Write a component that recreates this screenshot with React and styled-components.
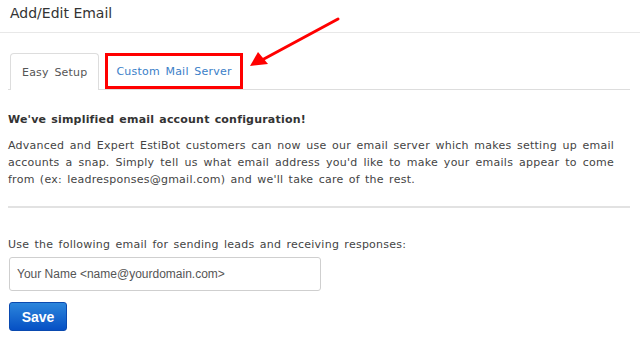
import React from "react";
import styled, { createGlobalStyle } from "styled-components";

const GlobalStyle = createGlobalStyle`
    body {
        margin: 0;
        background: #fff;
        font-family: "DejaVu Sans", Verdana, sans-serif;
        color: #333;
    }
`;

const Page = styled.div`
    position: relative;
    width: 640px;
    height: 347px;
    overflow: hidden;
`;

const Header = styled.div`
    box-sizing: border-box;
    height: 33px;
    border-bottom: 1px solid #e8e8e8;
    padding: 5px 0 0 10px;
`;

const Title = styled.h1`
    margin: 0;
    font-size: 14px;
    line-height: 17px;
    font-weight: normal;
    color: #333;
`;

const Content = styled.div`
    padding: 0 10px 0 8px;
`;

const Tabs = styled.div`
    display: flex;
    align-items: flex-end;
    gap: 6px;
    margin-top: 20px;
    padding-left: 2px;
    height: 36px;
    border-bottom: 1px solid #ddd;
`;

const Tab = styled.div`
    box-sizing: border-box;
    height: ${(p) => (p.$active ? "37px" : "36px")};
    margin-bottom: ${(p) => (p.$active ? "-1px" : "0")};
    display: flex;
    align-items: center;
    padding: 0 ${(p) => (p.$highlight ? "8px" : "11px")};
    font-size: 11px;
    letter-spacing: 0.2px;
    word-spacing: 2px;
    color: ${(p) => (p.$active ? "#555" : "#3b80c8")};
    background: #fff;
    border: ${(p) =>
        p.$highlight ? "3px solid #f00" : p.$active ? "1px solid #ddd" : "none"};
    border-bottom: ${(p) => (p.$active ? "none" : p.$highlight ? "3px solid #f00" : "none")};
    border-radius: ${(p) => (p.$active ? "4px 4px 0 0" : "0")};
`;

const Heading = styled.h3`
    margin: 23px 0 0;
    font-size: 11px;
    font-weight: bold;
    letter-spacing: 0.2px;
    word-spacing: 1px;
    color: #333;
`;

const Paragraph = styled.p`
    margin: 11px 0 0;
    width: 606px;
    font-size: 11px;
    line-height: 17px;
    letter-spacing: 0.25px;
    word-spacing: 1.5px;
    text-align: justify;
    color: #444;
`;

const Divider = styled.hr`
    margin: 18px 0 0;
    width: 622px;
    border: none;
    border-top: 2px solid #e2e2e2;
`;

const Label = styled.p`
    margin: 30px 0 0;
    font-size: 11px;
    letter-spacing: 0.25px;
    word-spacing: 1.5px;
    color: #444;
`;

const EmailInput = styled.input`
    display: block;
    box-sizing: border-box;
    margin: 6px 0 0 1px;
    width: 312px;
    height: 34px;
    padding: 0 7px;
    border: 1px solid #cfcfcf;
    border-radius: 3px;
    font-family: "Liberation Sans", Arial, sans-serif;
    font-size: 12px;
    color: #555;

    &::placeholder {
        color: #555;
    }
`;

const SaveButton = styled.button`
    display: block;
    margin: 11px 0 0 1px;
    width: 58px;
    height: 29px;
    border: 1px solid #0a4ab0;
    border-radius: 3px;
    background: linear-gradient(#2c86dc, #0650c4);
    color: #fff;
    font-family: "Liberation Sans", Arial, sans-serif;
    font-size: 14px;
    font-weight: bold;
    cursor: pointer;
`;

const Arrow = styled.svg`
    position: absolute;
    left: 0;
    top: 0;
    pointer-events: none;
`;

export default function App() {
    return (
        <Page>
            <GlobalStyle />
            <Header>
                <Title>Add/Edit Email</Title>
            </Header>
            <Content>
                <Tabs>
                    <Tab $active>Easy Setup</Tab>
                    <Tab $highlight>Custom Mail Server</Tab>
                </Tabs>
                <Heading>We've simplified email account configuration!</Heading>
                <Paragraph>
                    Advanced and Expert EstiBot customers can now use our email server which
                    makes setting up email accounts a snap. Simply tell us what email address
                    you'd like to make your emails appear to come from (ex:
                    leadresponses@gmail.com) and we'll take care of the rest.
                </Paragraph>
                <Divider />
                <Label>Use the following email for sending leads and receiving responses:</Label>
                <EmailInput placeholder="Your Name <name@yourdomain.com>" />
                <SaveButton>Save</SaveButton>
            </Content>
            <Arrow width="640" height="347" viewBox="0 0 640 347">
                <line x1="338" y1="19" x2="262" y2="60" stroke="#f00" strokeWidth="3" strokeLinecap="round" />
                <polygon points="250,66 258,52 268,64" fill="#f00" />
            </Arrow>
        </Page>
    );
}
